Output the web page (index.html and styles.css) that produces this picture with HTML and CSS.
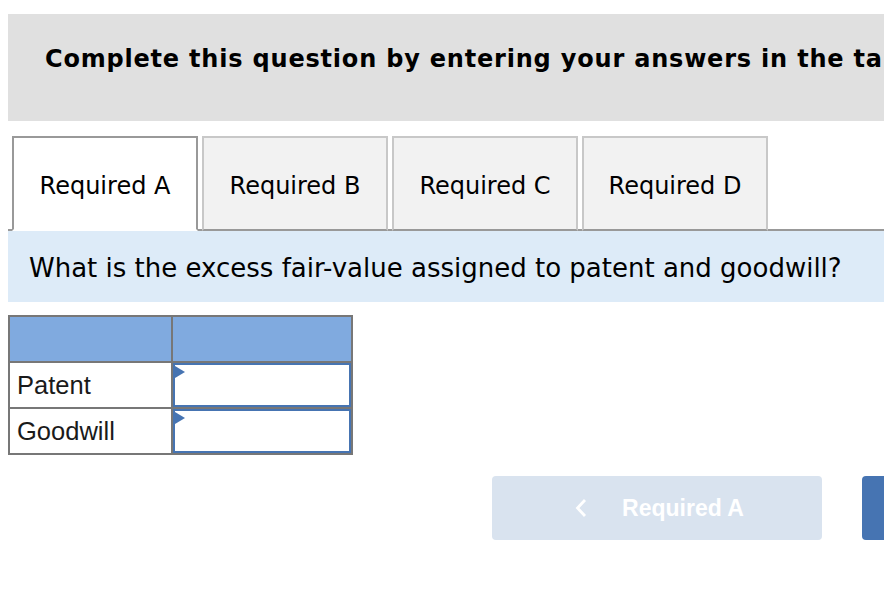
FILE: index.html
```html
<!DOCTYPE html>
<html lang="en">
<head>
    <meta charset="UTF-8">
    <title>Required A</title>
    <link rel="stylesheet" href="styles.css">
</head>
<body>
    <div class="page">
        <div class="instructions">
            <h2>Complete this question by entering your answers in the tabs below.</h2>
        </div>

        <div class="tabs">
            <div class="tab active">Required A</div>
            <div class="tab">Required B</div>
            <div class="tab">Required C</div>
            <div class="tab">Required D</div>
        </div>

        <div class="question">
            What is the excess fair-value assigned to patent and goodwill?
        </div>

        <table class="answer-table">
            <tr class="head-row">
                <th></th>
                <th></th>
            </tr>
            <tr>
                <td class="label-cell">Patent</td>
                <td class="input-cell"><div class="answer-box"></div></td>
            </tr>
            <tr>
                <td class="label-cell">Goodwill</td>
                <td class="input-cell"><div class="answer-box"></div></td>
            </tr>
        </table>

        <div class="nav-buttons">
            <button class="nav-btn prev" disabled>
                <svg class="chevron" width="14" height="22" viewBox="0 0 14 22">
                    <path d="M11 3 L3.5 11 L11 19" fill="none" stroke="#fff" stroke-width="2.8"/>
                </svg>
                Required A
            </button>
            <button class="nav-btn next"></button>
        </div>
    </div>
</body>
</html>
```

FILE: styles.css
```css
* {
    box-sizing: border-box;
}

html, body {
    overflow: hidden;
}

body {
    margin: 0;
    padding: 14px 0 0 8px;
    background: white;
    font-family: 'DejaVu Sans', Verdana, sans-serif;
    color: #000;
}

.page {
    width: 1300px;
}

.instructions {
    background: #e0e0e0;
    height: 107px;
    padding: 0 0 0 37px;
    display: flex;
    align-items: center;
}

.instructions h2 {
    margin: 0 0 18px 0;
    font-size: 24px;
    font-weight: bold;
    letter-spacing: 0.8px;
    white-space: nowrap;
}

.tabs {
    display: flex;
    gap: 4px;
    margin-top: 15px;
    padding-left: 4px;
    border-bottom: 2px solid #999;
}

.tab {
    width: 186px;
    height: 95px;
    margin-bottom: -2px;
    padding-top: 4px;
    display: flex;
    align-items: center;
    justify-content: center;
    font-size: 24px;
    background: #f2f2f2;
    border: 2px solid #c8c8c8;
    border-bottom: 2px solid #999;
}

.tab.active {
    background: white;
    border-color: #999;
    border-bottom-color: white;
}

.question {
    background: #ddebf8;
    height: 71px;
    padding: 2px 0 0 21px;
    display: flex;
    align-items: center;
    font-size: 26px;
}

.answer-table {
    margin-top: 13px;
    border-collapse: collapse;
    font-family: 'Liberation Sans', Arial, sans-serif;
    font-size: 25.5px;
}

.answer-table th,
.answer-table td {
    border: 2px solid #777;
    height: 46px;
    padding: 0;
}

.head-row th {
    background: #80aadf;
}

.head-row th:first-child {
    width: 163px;
}

.head-row th:last-child {
    width: 180px;
}

.label-cell {
    padding-left: 7px !important;
    color: #1a1a1a;
}

.input-cell {
    position: relative;
}

.answer-box {
    height: 44px;
    border: 2px solid #4674b2;
    background: white;
    margin: 0;
}

/* little corner flag on each entry box */
.input-cell::before {
    content: "";
    position: absolute;
    top: 3px;
    left: 2px;
    border-top: 6px solid transparent;
    border-bottom: 6px solid transparent;
    border-left: 10px solid #4674b2;
}

.nav-buttons {
    display: flex;
    gap: 40px;
    margin-top: 21px;
    padding-left: 484px;
}

.nav-btn {
    flex-shrink: 0;
    height: 64px;
    border: none;
    border-radius: 4px;
    font-family: 'Liberation Sans', Arial, sans-serif;
    font-size: 23px;
    font-weight: bold;
    color: white;
}

.nav-btn.prev {
    width: 330px;
    background: #d9e3ef;
    display: flex;
    align-items: center;
    justify-content: center;
    gap: 34px;
    padding: 0 0 0 4px;
}

.nav-btn.next {
    width: 330px;
    background: #4674b2;
}
```
